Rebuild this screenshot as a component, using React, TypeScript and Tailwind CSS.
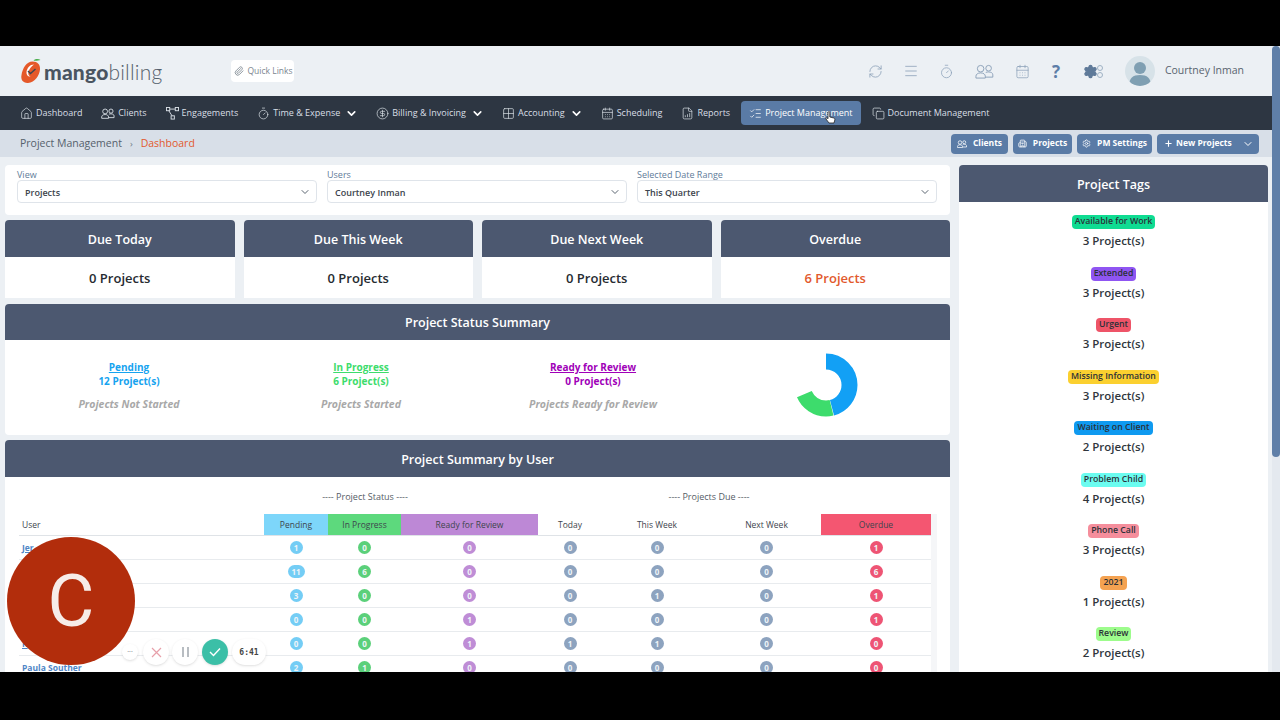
import {
  CalendarDays,
  ChevronDown,
  CircleDollarSign,
  Copy,
  FileBarChart,
  Grid2x2,
  Home,
  Menu,
  Paperclip,
  ListChecks,
  Plus,
  RefreshCw,
  Settings,
  Timer,
  Building2,
} from 'lucide-react'

function PeopleIcon({ size = 11, strokeWidth = 1.2 }: { size?: number; strokeWidth?: number }) {
  return (
    <svg width={size * 1.25} height={size} viewBox="0 0 20 16" fill="none" stroke="currentColor" strokeWidth={strokeWidth}>
      <circle cx="6" cy="5" r="3.500" />
      <circle cx="14.500" cy="4.500" r="3" />
      <path d="M1 15v-2c0-2 2-3.500 5-3.500s5 1.500 5 3.500v2z" />
      <path d="M11.500 9c1-.5 2-.5 3-.5 2.500 0 4.500 1 4.500 3v2.500h-8" />
    </svg>
  )
}

function BranchIcon({ size = 13 }: { size?: number }) {
  return (
    <svg width={size} height={size} viewBox="0 0 14 14" fill="none" stroke="currentColor" strokeWidth="1">
      <rect x="0.500" y="0.500" width="3.500" height="3.500" />
      <rect x="10" y="0.500" width="3.500" height="3.500" />
      <rect x="5.500" y="9.500" width="3.500" height="3.500" />
      <path d="M4 2.250h6M3 4l3.500 5.500" />
    </svg>
  )
}

const navItems = [
  { label: 'Dashboard', icon: Home, size: 13 },
  { label: 'Clients', icon: PeopleIcon, size: 11 },
  { label: 'Engagements', icon: BranchIcon, size: 13 },
  { label: 'Time & Expense', icon: Timer, size: 13, caret: true },
  { label: 'Billing & Invoicing', icon: CircleDollarSign, size: 13, caret: true },
  { label: 'Accounting', icon: Grid2x2, size: 13, caret: true },
  { label: 'Scheduling', icon: CalendarDays, size: 13 },
  { label: 'Reports', icon: FileBarChart, size: 13 },
  { label: 'Project Management', icon: ListChecks, size: 13, active: true },
  { label: 'Document Management', icon: Copy, size: 13 },
]

const tags = [
  { label: 'Available for Work', count: 3, color: 'bg-[#0fdc92]' },
  { label: 'Extended', count: 3, color: 'bg-[#8f55f2]' },
  { label: 'Urgent', count: 3, color: 'bg-[#ee5468]' },
  { label: 'Missing Information', count: 3, color: 'bg-[#fbd02f]' },
  { label: 'Waiting on Client', count: 2, color: 'bg-[#0f9af0]' },
  { label: 'Problem Child', count: 4, color: 'bg-[#6bfcf0]' },
  { label: 'Phone Call', count: 3, color: 'bg-[#f58e9c]' },
  { label: '2021', count: 1, color: 'bg-[#f4a251]' },
  { label: 'Review', count: 2, color: 'bg-[#9dfc8c]' },
]

// names behind the webcam bubble can't be read in the recording
const rows = [
  { id: 1, user: 'Jer', v: [1, 0, 0, 0, 0, 0, 1] },
  { id: 2, user: '', v: [11, 6, 0, 0, 0, 0, 6] },
  { id: 3, user: '', v: [3, 0, 0, 0, 1, 0, 1] },
  { id: 4, user: '', v: [0, 0, 1, 0, 0, 0, 1] },
  { id: 5, user: 'K', v: [0, 0, 1, 1, 1, 0, 0] },
  { id: 6, user: 'Paula Souther', v: [2, 1, 0, 0, 0, 0, 0] },
]

const badgeColors = [
  'bg-[#74cdf5]',
  'bg-[#5bd07a]',
  'bg-[#bf8dd6]',
  'bg-[#8da3bf]',
  'bg-[#8da3bf]',
  'bg-[#8da3bf]',
  'bg-[#ee5474]',
]

const tableCols = 'grid grid-cols-[245px_64px_73px_137px_64px_110px_109px_110px]'

function CardHeader({ title, size = 'h-[37px] pt-[3px]' }: { title: string; size?: string }) {
  return (
    <div className={`flex items-center justify-center rounded-t bg-[#4c5870] text-[12.500px] font-semibold text-white ${size}`}>
      {title}
    </div>
  )
}

function FilterSelect({ label, value }: { label: string; value: string }) {
  return (
    <div className="w-[300px]">
      <div className="h-3 pt-[1px] text-[9px] leading-3 text-[#5f7c99]">{label}</div>
      <div className="flex h-[23px] items-center justify-between rounded-sm border border-[#dfe4ea] pl-[7px] pr-[5px] text-[9px] font-semibold text-[#3c444d]">
        <span className="pt-[2px]">{value}</span>
        <ChevronDown size={12} className="text-[#5a6470]" />
      </div>
    </div>
  )
}

function DueCard({ title, value, danger }: { title: string; value: string; danger?: boolean }) {
  return (
    <div className="rounded-t bg-white">
      <CardHeader title={title} />
      <div className={`flex h-[41px] items-center justify-center pt-[3px] text-[13px] font-semibold ${danger ? 'text-[#e2592d]' : 'text-[#262b31]'}`}>
        {value}
      </div>
    </div>
  )
}

function StatusColumn(props: { title: string; count: string; note: string; color: string }) {
  return (
    <div className={`flex flex-col items-center pt-5 text-[10px] font-bold leading-[14px] ${props.color}`}>
      <span className="underline">{props.title}</span>
      <span>{props.count}</span>
      <span className="mt-[9px] text-[10.500px] italic text-[#a8a8a8]">{props.note}</span>
    </div>
  )
}

function Logo() {
  return (
    <div className="-ml-[1px] flex items-center">
      <svg width="25" height="26" viewBox="0 0 24 26">
        <path d="M14 2.500c2-1.800 5-1.800 7-.6-2 .4-4.500 1.200-7 .6z" fill="#4caf50" />
        <path d="M13 3.500c5 0 8 3 7.500 8-.6 6-5 13-12 13.500-5 .3-7.500-3.500-6.500-8C3 10.500 7 3.500 13 3.500z" fill="#e5592a" />
        <path d="M14.500 6.500c-4 0-7 3.500-7.500 7.500-.3 3 1.500 5 4 4.500-2-.6-2.500-2.500-2-4.500.7-3 3-6 5.500-7.500z" fill="#fff" />
        <path d="M8.500 13l2.500 2.500 5-4.500" fill="none" stroke="#3d4650" strokeWidth="1.400" />
      </svg>
      <span className="font-['Lato',sans-serif] text-[21px] leading-none tracking-[0.2px] text-[#4a5561]">
        <b className="font-black">mango</b>
        <span className="font-light text-[#56616c]">billing</span>
      </span>
    </div>
  )
}

export default function App() {
  return (
    <div className="relative h-[720px] w-[1280px] overflow-hidden bg-black pb-12 pt-[46px] font-['Open_Sans',sans-serif]">
      <div className="flex h-[626px] overflow-hidden bg-[#ecf0f4]">
        <div className="w-[1272px] shrink-0">
          {/* top bar */}
          <header className="flex h-[50px] items-center pl-5 pr-7">
            <div className="w-[211px]">
              <Logo />
            </div>
            <div className="flex h-[22px] w-[63px] items-center justify-center gap-[3px] rounded-sm bg-white pl-[2px] text-[8.500px] text-[#7b858f]">
              <Paperclip size={10} />
              Quick Links
            </div>
            <div className="ml-auto flex items-center text-[#8ba0b8]">
              <RefreshCw size={15} strokeWidth={1.300} />
              <Menu size={16} strokeWidth={1.200} className="ml-[20px]" />
              <Timer size={15} strokeWidth={1.200} className="ml-[20px]" />
              <span className="ml-[21px]">
                <PeopleIcon size={15} strokeWidth={1} />
              </span>
              <CalendarDays size={15} strokeWidth={1.200} className="ml-[21px]" />
              <span className="ml-[22px] w-[10px] text-[17px] font-bold leading-none text-[#5d7ea8]">?</span>
              <span className="ml-[21px] flex items-center">
                <Settings size={15} fill="#5f7a99" className="text-[#5f7a99]" />
                <span className="-ml-[1px] flex flex-col gap-[1px]">
                  <span className="h-[6px] w-[6px] rounded-full border border-[#9fb2c4]" />
                  <span className="h-[6px] w-[6px] rounded-full border border-[#9fb2c4]" />
                </span>
              </span>
              <div className="ml-[22px] flex h-[30px] w-[30px] items-end justify-center overflow-hidden rounded-full bg-[#d7e2e8]">
                <svg width="22" height="26" viewBox="0 0 22 26">
                  <circle cx="11" cy="8" r="6" fill="#7f9fb2" />
                  <path d="M0 26c0-8 4-11 11-11s11 3 11 11z" fill="#7f9fb2" />
                </svg>
              </div>
              <span className="ml-[10px] text-[10.500px] text-[#59646f]">Courtney Inman</span>
            </div>
          </header>

          {/* main nav */}
          <nav className="flex h-[34px] items-start gap-[19px] bg-[#2d3642] pl-5 pt-[5px] text-[9px] text-[#d9dfe6]">
            {navItems.map(({ label, icon: Icon, size, caret, active }) => (
              <div
                key={label}
                className={`flex h-6 items-center gap-[3px] rounded-sm ${active ? '-mx-2 bg-[#5a7ba6] px-2 text-white' : ''}`}
              >
                <Icon size={size} strokeWidth={1.300} />
                {label}
                {caret && <ChevronDown size={13} strokeWidth={3} className="-mr-[1px] ml-[2px] text-white" />}
              </div>
            ))}
          </nav>

          {/* breadcrumb bar */}
          <div className="flex h-[27px] items-center bg-[#d8dfe8] pl-5 pr-[13px] text-[10.500px]">
            <span className="text-[#56616c]">Project Management</span>
            <span className="mx-2 text-[9px] text-[#6d7782]">›</span>
            <span className="font-medium text-[#e2592d]">Dashboard</span>
            <div className="ml-auto flex gap-[5px] text-[8.500px] font-bold text-white">
              <div className="flex h-5 w-[57px] items-center justify-center gap-[6px] rounded-sm bg-[#5a7ba6]">
                <PeopleIcon size={8} strokeWidth={1.500} />
                Clients
              </div>
              <div className="flex h-5 w-[59px] items-center justify-center gap-[6px] rounded-sm bg-[#5a7ba6]">
                <Building2 size={9} />
                Projects
              </div>
              <div className="flex h-5 w-[75px] items-center justify-center gap-[6px] rounded-sm bg-[#5a7ba6]">
                <Settings size={9} />
                PM Settings
              </div>
              <div className="flex h-5 w-[102px] items-center rounded-sm bg-[#5a7ba6] pl-[7px] pr-[5px]">
                <Plus size={9} strokeWidth={3} />
                <span className="ml-[3px]">New Projects</span>
                <ChevronDown size={12} className="ml-auto" />
              </div>
            </div>
          </div>

          {/* page body */}
          <div className="grid grid-cols-[945px_309px] gap-[9px] pl-[5px] pt-2">
            <div>
              <div className="flex h-[50px] gap-[10px] rounded bg-white pl-3 pt-[3px]">
                <FilterSelect label="View" value="Projects" />
                <FilterSelect label="Users" value="Courtney Inman" />
                <FilterSelect label="Selected Date Range" value="This Quarter" />
              </div>

              <div className="mt-[5px] grid grid-cols-4 gap-[9px]">
                <DueCard title="Due Today" value="0 Projects" />
                <DueCard title="Due This Week" value="0 Projects" />
                <DueCard title="Due Next Week" value="0 Projects" />
                <DueCard title="Overdue" value="6 Projects" danger />
              </div>

              <section className="mt-[6px] rounded bg-white">
                <CardHeader title="Project Status Summary" size="h-9 pt-[3px]" />
                <div className="grid h-[95px] grid-cols-[232px_232px_232px_236px] pl-2">
                  <StatusColumn title="Pending" count="12 Project(s)" note="Projects Not Started" color="text-[#16a3ef]" />
                  <StatusColumn title="In Progress" count="6 Project(s)" note="Projects Started" color="text-[#3ddc6c]" />
                  <StatusColumn title="Ready for Review" count="0 Project(s)" note="Projects Ready for Review" color="text-[#a000b8]" />
                  <div className="flex justify-center pr-[2px] pt-[13px]">
                    <svg width="64" height="64" viewBox="0 0 64 64" className="-rotate-90">
                      <circle cx="32" cy="32" r="23.500" fill="none" stroke="#12a0f5" strokeWidth="16" pathLength="360" strokeDasharray="165 195" />
                      <circle cx="32" cy="32" r="23.500" fill="none" stroke="#3ddc6c" strokeWidth="16" pathLength="360" strokeDasharray="81 279" strokeDashoffset="-166" />
                    </svg>
                  </div>
                </div>
              </section>

              <section className="mt-[5px] rounded-t bg-white">
                <CardHeader title="Project Summary by User" />
                <div className="pl-[14px]">
                  <div className="flex h-[37px] items-center gap-[21px] pl-[245px] pt-[3px] text-[9px] text-[#555d66]">
                    <span className="w-[202px] text-center">---- Project Status ----</span>
                    <span className="w-[444px] text-center">---- Projects Due ----</span>
                  </div>
                  <div className="flex">
                    <div className="w-[912px]">
                      <div className={`${tableCols} h-[22px] items-center border-b border-[#dfe3e7] text-center text-[8.500px] text-[#3e454d]`}>
                        <span className="pl-[3px] pt-[1px] text-left">User</span>
                        <span className="flex h-full items-center justify-center bg-[#7dd6fa] pt-[1px]">Pending</span>
                        <span className="flex h-full items-center justify-center bg-[#5dd97d] pt-[1px]">In Progress</span>
                        <span className="flex h-full items-center justify-center bg-[#bd88d6] pt-[1px]">Ready for Review</span>
                        <span className="pt-[1px]">Today</span>
                        <span className="pt-[1px]">This Week</span>
                        <span className="pt-[1px]">Next Week</span>
                        <span className="flex h-full items-center justify-center bg-[#f45671] pt-[1px]">Overdue</span>
                      </div>
                      {rows.map((row) => (
                        <div key={row.id} className={`${tableCols} h-6 items-center border-b border-[#e8ebee]`}>
                          <span className="pl-[3px] pt-[1px] text-[8.500px] font-bold text-[#4f86c6] underline">{row.user}</span>
                          {row.v.map((n, i) => (
                            <div key={i} className="flex justify-center">
                              <span className={`flex h-[13px] items-center justify-center rounded-full text-[8px] font-bold text-[#eef4f8] ${n > 9 ? 'w-[17px]' : 'w-[13px]'} ${badgeColors[i]}`}>
                                {n}
                              </span>
                            </div>
                          ))}
                        </div>
                      ))}
                    </div>
                    <div className="w-[6px] bg-[#f5f6f8]" />
                  </div>
                </div>
              </section>
            </div>

            <aside className="rounded-t bg-white">
              <CardHeader title="Project Tags" />
              <div className="flex flex-col items-center pt-[13px]">
                {tags.map((tag) => (
                  <div key={tag.label} className="flex h-[51.500px] flex-col items-center">
                    <span className={`flex h-[14px] items-center rounded-sm px-[3px] text-[8.750px] font-semibold text-[#2b3138] ${tag.color}`}>
                      {tag.label}
                    </span>
                    <span className="mt-1 text-[11.500px] font-semibold leading-4 text-[#30363c]">
                      {tag.count} Project(s)
                    </span>
                  </div>
                ))}
              </div>
            </aside>
          </div>
        </div>

        {/* page scrollbar */}
        <div className="w-2 shrink-0 bg-[#e4e9ef]">
          <div className="h-[411px] rounded-full bg-[#5f7fa8]" />
        </div>
      </div>

      {/* recorder overlay */}
      <div className="absolute left-[7px] top-[537px] flex h-[128px] w-[128px] items-center justify-center rounded-full bg-[#b22d0c] pt-[2px] font-['Roboto',sans-serif] text-[72px] text-[#f7ece8]">
        C
      </div>
      <div className="absolute left-[122px] top-[639px] flex h-[26px] items-center">
        <div className="flex h-4 w-4 items-center justify-center rounded-full bg-white text-[7px] text-[#555] shadow">···</div>
        <div className="ml-[5px] flex h-[26px] w-[26px] items-center justify-center rounded-full bg-white text-[#e7a0aa] shadow">
          <svg width="11" height="11" viewBox="0 0 11 11" stroke="currentColor" strokeWidth="1.200">
            <path d="M1 1l9 9M10 1l-9 9" />
          </svg>
        </div>
        <div className="ml-[3px] flex h-[26px] w-[26px] items-center justify-center gap-[3px] rounded-full bg-white shadow">
          <span className="h-[10px] w-[2px] bg-[#b8bdc2]" />
          <span className="h-[10px] w-[2px] bg-[#b8bdc2]" />
        </div>
        <div className="ml-[4px] flex h-[26px] w-[26px] items-center justify-center rounded-full bg-[#3bbfa7] shadow">
          <svg width="12" height="10" viewBox="0 0 12 10" fill="none" stroke="#fff" strokeWidth="1.400">
            <path d="M1 5l3.500 3.500L11 1.500" />
          </svg>
        </div>
        <div className="ml-[4px] flex h-[26px] w-[34px] items-center justify-center rounded-full bg-white pt-[1px] font-['DejaVu_Sans_Mono',monospace] text-[8px] font-semibold text-[#444] shadow">
          6:41
        </div>
      </div>
      {/* pointer */}
      <svg width="11" height="13" viewBox="0 0 11 13" className="absolute left-[825px] top-[111px]">
        <path d="M3 1.500c0-1 1.800-1 1.800 0V6l4 1c1 .3 1.200 1 1 2l-.8 3H4L1 8c-.5-.8.500-1.500 1.200-1L3 7.800z" fill="#fff" stroke="#222" strokeWidth=".8" />
      </svg>
    </div>
  )
}
